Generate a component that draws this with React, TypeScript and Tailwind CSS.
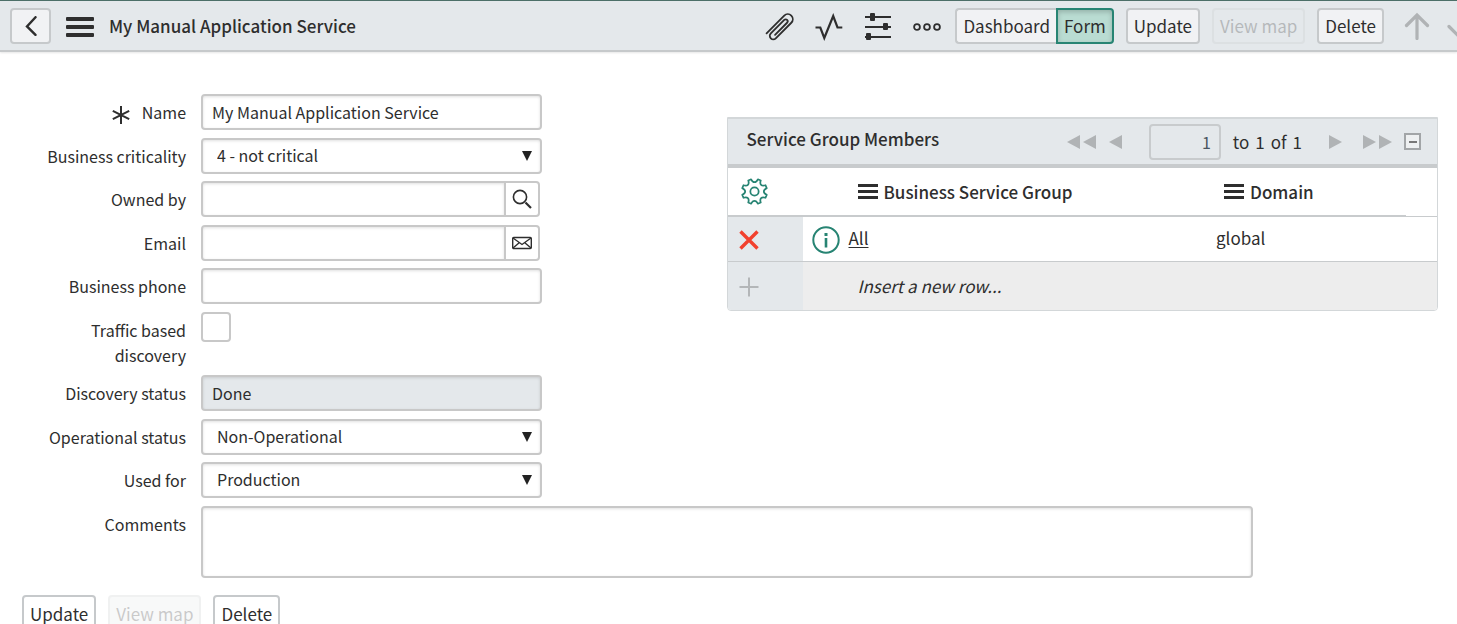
import { useState } from "react";
import type { ReactNode } from "react";

const FIELD =
  "h-9 w-full rounded border-2 border-[#c8c8c8] bg-white text-[16px] text-[#2e2e2e] shadow-[inset_0_1px_3px_rgba(0,0,0,0.12)] outline-none";
const BUTTON =
  "h-9 rounded border-2 border-[#c6c9cb] px-[6px] text-[17px] leading-none text-[#2e2e2e]";

function Burger() {
  return (
    <svg viewBox="0 0 28 21" className="h-[21px] w-7" fill="currentColor" aria-hidden="true">
      <rect y="0" width="28" height="4" rx="1" />
      <rect y="8" width="28" height="4" rx="1" />
      <rect y="16" width="28" height="4" rx="1" />
    </svg>
  );
}

function SmallBurger() {
  return (
    <svg viewBox="0 0 20 16" className="h-4 w-5 shrink-0" fill="currentColor" aria-hidden="true">
      <rect y="0" width="20" height="3" />
      <rect y="6" width="20" height="3" />
      <rect y="12" width="20" height="3" />
    </svg>
  );
}

function PaperclipIcon() {
  return (
    <svg viewBox="0 0 28 28" className="h-7 w-7 overflow-visible" fill="none" stroke="currentColor" strokeWidth="1.8" strokeLinecap="round">
      <path
        transform="rotate(45 14 14)"
        d="M9 28V3a5 5 0 0 1 10 0v22a3.500 3.500 0 0 1-7 0V6a2 2 0 0 1 4 0v17"
      />
    </svg>
  );
}

function ActivityIcon() {
  return (
    <svg viewBox="0 0 28 28" className="h-7 w-7" fill="none" stroke="currentColor" strokeWidth="2.2">
      <path d="M.5 14.5h4.800l4 10.500L18.200 3l4.300 11.500h4.800" />
    </svg>
  );
}

function SlidersIcon() {
  return (
    <svg viewBox="0 0 28 28" className="h-7 w-7" fill="currentColor">
      <rect x="1" y="3" width="26" height="2" />
      <rect x="6" y="0" width="5" height="8" rx="1" />
      <rect x="1" y="13" width="26" height="2" />
      <rect x="19" y="10" width="5" height="7" rx="1" />
      <rect x="1" y="23" width="26" height="2" />
      <rect x="2" y="20" width="5" height="7" rx="1" />
    </svg>
  );
}

function MoreIcon() {
  return (
    <svg viewBox="0 0 28 28" className="h-7 w-7" fill="none" stroke="currentColor" strokeWidth="1.8">
      <circle cx="4" cy="14" r="2.900" />
      <circle cx="14" cy="14" r="2.900" />
      <circle cx="24" cy="14" r="2.900" />
    </svg>
  );
}

function ArrowIcon({ down }: { down?: boolean }) {
  return (
    <svg viewBox="0 0 26 28" className="h-7 w-[26px]" fill="none" stroke="currentColor" strokeWidth="3.2" strokeLinecap="round">
      {down ? <path d="M13 2v23M2 14.500l11 11 11-11" /> : <path d="M13 26.500V3M2.500 13.500 13 3l10.500 10.500" />}
    </svg>
  );
}

function GearIcon() {
  return (
    <svg viewBox="0 0 26 26" className="h-[27px] w-[27px]" fill="none" stroke="currentColor" strokeWidth="1.7" strokeLinejoin="round">
      <path d="M16.260 1.240 19 2.380C17.700 6.280 19.720 8.300 23.620 7L24.760 9.740C21.080 11.580 21.080 14.420 24.760 16.260L23.620 19C19.720 17.700 17.700 19.720 19 23.620L16.260 24.760C14.420 21.080 11.580 21.080 9.740 24.760L7 23.620C8.300 19.720 6.280 17.700 2.380 19L1.240 16.260C4.920 14.420 4.920 11.580 1.240 9.740L2.380 7C6.280 8.300 8.300 6.280 7 2.380L9.740 1.240C11.580 4.920 14.420 4.920 16.260 1.240Z" />
      <circle cx="13" cy="13" r="4" />
    </svg>
  );
}

function InfoIcon() {
  return (
    <svg viewBox="0 0 28 28" className="h-7 w-7" fill="none" stroke="currentColor" strokeWidth="2">
      <circle cx="14" cy="14" r="12.700" />
      <path d="M14 12v9.500" strokeWidth="2.6" />
      <path d="M14 7v3" strokeWidth="3" />
    </svg>
  );
}

function SearchIcon() {
  return (
    <svg viewBox="0 0 20 20" className="h-5 w-5" fill="none" stroke="currentColor" strokeWidth="1.6">
      <circle cx="8" cy="8" r="6.600" />
      <path d="m13.500 13.500 5.500 5.500" strokeWidth="2.2" />
    </svg>
  );
}

function MailIcon() {
  return (
    <svg viewBox="0 0 20 14" className="h-3.5 w-5" fill="none" stroke="currentColor" strokeWidth="1.4">
      <rect x="0.7" y="1.5" width="18.6" height="11" rx="1" />
      <path d="m1 2 9 6.500L19 2M1 12l6.500-5.500M19 12l-6.500-5.500" />
    </svg>
  );
}

function Row({ id, label, required, children, className = "mb-2" }: {
  id: string;
  label: string;
  required?: boolean;
  children: ReactNode;
  className?: string;
}) {
  return (
    <div className={`grid grid-cols-[186px_minmax(0,341px)] gap-x-[15px] ${className}`}>
      <label htmlFor={id} className="flex justify-end gap-3 pt-[6px] pl-7 text-right text-[16px] leading-[25px]">
        {required && (
          <svg viewBox="0 0 18 18" className="mt-[6px] h-[18px] w-[18px]" fill="none" stroke="currentColor" strokeWidth="2">
            <path d="M9 0v18M.8 4.800l16.400 8.400M17.200 4.800.8 13.200" />
          </svg>
        )}
        {label}
      </label>
      {children}
    </div>
  );
}

function SelectField({ id, options }: { id: string; options: string[] }) {
  return (
    <div className="relative">
      <select id={id} className={`${FIELD} appearance-none pb-[2px] pl-[14px]`}>
        {options.map((o) => (
          <option key={o}>{o}</option>
        ))}
      </select>
      <svg viewBox="0 0 10 10" className="pointer-events-none absolute top-[13px] right-[10px] h-2.5 w-2.5" fill="#222">
        <path d="M0 0h10L5 10z" />
      </svg>
    </div>
  );
}

function AddonField({ id, label, icon }: { id: string; label: string; icon: ReactNode }) {
  return (
    <div className="mr-[2px] flex">
      <input id={id} className={`${FIELD} min-w-0 flex-1 rounded-r-none px-[9px]`} />
      <button
        aria-label={label}
        className="-ml-[2px] flex h-9 w-9 shrink-0 items-center justify-center rounded-r border-2 border-[#c8c8c8] bg-white"
      >
        {icon}
      </button>
    </div>
  );
}

function Pager({ label, double, right }: { label: string; double?: boolean; right?: boolean }) {
  return (
    <button aria-label={label} className="flex gap-[2px] text-[#b0b3b5]">
      {(double ? [0, 1] : [0]).map((i) => (
        <svg key={i} viewBox="0 0 14 14" className="h-3.5 w-3.5" fill="currentColor">
          <path d={right ? "M0 0v14l13-7z" : "M13 0v14L0 7z"} />
        </svg>
      ))}
    </button>
  );
}

function Header() {
  const [view, setView] = useState("Form");
  return (
    <header className="flex h-[52px] items-center justify-between border-t border-b-2 border-t-[#4c6f68] border-b-[#c6c9cb] bg-[#e4e8eb] pl-[10px] shadow-[0_1px_2px_rgba(0,0,0,0.1)]">
      <div className="flex items-center gap-[15px]">
        <button aria-label="Back" className="flex h-9 w-[41px] items-center justify-center rounded border-2 border-[#c6c9cb] bg-[#f1f2f4]">
          <svg viewBox="0 0 12 20" className="h-5 w-3" fill="none" stroke="currentColor" strokeWidth="2.4" strokeLinecap="round">
            <path d="M10.500 1.200 2 10.400l8.500 8.400" />
          </svg>
        </button>
        <button aria-label="Menu" className="pt-1">
          <Burger />
        </button>
        <h1 className="text-[17px] font-medium">My Manual Application Service</h1>
      </div>
      <div className="-mr-4 flex shrink-0 items-center">
        <div className="mr-[14px] flex gap-[21px] pt-[2px]">
          <button aria-label="Attachments"><PaperclipIcon /></button>
          <button aria-label="Activity"><ActivityIcon /></button>
          <button aria-label="Personalize form"><SlidersIcon /></button>
          <button aria-label="More options"><MoreIcon /></button>
        </div>
        <div className="mr-3 flex">
          {["Dashboard", "Form"].map((v) => (
            <button
              key={v}
              onClick={() => setView(v)}
              className={`h-9 border-2 px-[6px] text-[17px] leading-none first:rounded-l first:border-r-0 last:rounded-r ${
                view === v
                  ? "border-[#278473] bg-[#b9dcd2] shadow-[inset_0_2px_5px_rgba(0,0,0,0.2)]"
                  : "border-[#c6c9cb] bg-[#f1f2f4]"
              }`}
            >
              {v}
            </button>
          ))}
        </div>
        <div className="flex gap-3">
          <button className={`${BUTTON} bg-[#f1f2f4]`}>Update</button>
          <button disabled className={`${BUTTON} opacity-25`}>View map</button>
          <button className={`${BUTTON} bg-[#f1f2f4]`}>Delete</button>
        </div>
        <div className="ml-5 flex gap-[17px] text-[#b0b3b5]">
          <button aria-label="Previous record"><ArrowIcon /></button>
          <button aria-label="Next record"><ArrowIcon down /></button>
        </div>
      </div>
    </header>
  );
}

function MembersPanel() {
  return (
    <section className="overflow-hidden rounded-b border border-[#d3d7d9]">
      <div className="flex h-[50px] items-center border-t border-b-4 border-t-[#d3d7d9] border-b-[#c8cbcd] bg-[#e4e8eb] pr-4 pl-[19px]">
        <h2 className="mr-auto pb-1.5 text-[17px] font-medium">Service Group Members</h2>
        <div className="flex items-center gap-3">
          <Pager label="First page" double />
          <Pager label="Previous page" />
        </div>
        <input
          aria-label="Page"
          defaultValue="1"
          className="ml-[26px] h-9 w-[72px] rounded border-2 border-[#c8cbcd] px-2 text-right text-[16px] text-[#4a5560]"
        />
        <span className="mr-[27px] ml-3 flex gap-[6px] text-[17px]">
          <span>to</span>
          <span>1</span>
          <span>of</span>
          <span>1</span>
        </span>
        <div className="flex items-center gap-5">
          <Pager label="Next page" right />
          <Pager label="Last page" double right />
        </div>
        <button aria-label="Collapse" className="ml-[11px] flex h-[17px] w-[17px] items-center justify-center border-2 border-[#a2a5a7] bg-[#eef0f1]">
          <span className="h-[2px] w-2 bg-[#777]" />
        </button>
      </div>
      <table className="w-full table-fixed border-separate border-spacing-0 text-left text-[17px]">
        <colgroup>
          <col className="w-[75px]" />
          <col />
          <col className="w-[200px]" />
          <col className="w-[31px]" />
        </colgroup>
        <thead>
          <tr className="h-[49px]">
            <th className="border-b-2 border-[#c8cbcd] pl-[13px]">
              <button aria-label="Personalize list" className="block text-[#278473]"><GearIcon /></button>
            </th>
            <th className="border-b-2 border-[#c8cbcd] pl-[55px] font-medium">
              <span className="flex items-center gap-[6px]"><SmallBurger />Business Service Group</span>
            </th>
            <th className="border-b-2 border-[#c8cbcd] pl-[18px] font-medium">
              <span className="flex items-center gap-[6px]"><SmallBurger />Domain</span>
            </th>
            <td className="border-b border-[#c8cbcd]" />
          </tr>
        </thead>
        <tbody>
          <tr className="h-[45px]">
            <td className="border-b border-[#c8cbcd] bg-[#e4e8eb] pt-[2px] pl-[11px]">
              <button aria-label="Delete row" className="block">
                <svg viewBox="0 0 20 20" className="h-5 w-5" stroke="#f2412e" strokeWidth="3.4">
                  <path d="m1.500 1.500 17 17M18.500 1.500l-17 17" />
                </svg>
              </button>
            </td>
            <td className="border-b border-[#c8cbcd] pt-[2px] pl-[9px]">
              <span className="flex items-center gap-[9px]">
                <button aria-label="Preview record" className="text-[#278473]"><InfoIcon /></button>
                <a href="#all" className="pb-1 underline underline-offset-2">All</a>
              </span>
            </td>
            <td className="border-b border-[#c8cbcd] pb-[2px] pl-[10px]">global</td>
            <td className="border-b border-[#c8cbcd]" />
          </tr>
          <tr className="h-12">
            <td className="bg-[#e4e8eb] pt-[2px] pl-[11px]">
              <svg viewBox="0 0 20 20" className="h-5 w-5" stroke="#b3b6b8" strokeWidth="2">
                <path d="M10 .5v19M.5 10h19" />
              </svg>
            </td>
            <td colSpan={3} className="bg-[#ededed] pl-[55px] italic">Insert a new row...</td>
          </tr>
        </tbody>
      </table>
    </section>
  );
}

export default function App() {
  return (
    <div className="h-screen overflow-hidden bg-white font-['Noto_Sans_CJK_SC',sans-serif] text-[#2e2e2e]">
      <Header />

      <main className="pt-[42px]">
        <div className="grid grid-cols-2">
          <div>
            <Row id="name" label="Name" required>
              <input id="name" defaultValue="My Manual Application Service" className={`${FIELD} px-[9px]`} />
            </Row>
            <Row id="criticality" label="Business criticality" className="mb-[7px]">
              <SelectField id="criticality" options={["4 - not critical", "1 - most critical"]} />
            </Row>
            <Row id="owner" label="Owned by">
              <AddonField id="owner" label="Look up owner" icon={<SearchIcon />} />
            </Row>
            <Row id="email" label="Email" className="mb-[7px]">
              <AddonField id="email" label="Send email" icon={<MailIcon />} />
            </Row>
            <Row id="phone" label="Business phone">
              <input id="phone" className={`${FIELD} px-[9px]`} />
            </Row>
            <Row id="traffic" label="Traffic based discovery" className="mb-[7px]">
              <input id="traffic" type="checkbox" className="h-[30px] w-[30px] appearance-none rounded border-2 border-[#c8c8c8]" />
            </Row>
            <Row id="discovery" label="Discovery status">
              <input id="discovery" readOnly value="Done" className={`${FIELD} bg-[#e4e8eb]! px-[9px]`} />
            </Row>
            <Row id="operational" label="Operational status" className="mb-[7px]">
              <SelectField id="operational" options={["Non-Operational", "Operational"]} />
            </Row>
            <Row id="used" label="Used for">
              <SelectField id="used" options={["Production", "Development", "Test"]} />
            </Row>
          </div>

          <div className="-ml-[2px] pt-[23px] pr-[19px]">
            <MembersPanel />
          </div>
        </div>

        <div className="mr-[204px] grid grid-cols-[186px_1fr] gap-x-[15px]">
          <label htmlFor="comments" className="pt-[6px] text-right text-[16px] leading-[25px]">Comments</label>
          <textarea id="comments" className={`${FIELD} h-[72px]! resize-none p-2`} />
        </div>

        <div className="mt-[17px] ml-[22px] flex gap-3">
          <button className={BUTTON}>Update</button>
          <button disabled className={`${BUTTON} bg-[#e4e8eb] opacity-25`}>View map</button>
          <button className={BUTTON}>Delete</button>
        </div>
      </main>
    </div>
  );
}
